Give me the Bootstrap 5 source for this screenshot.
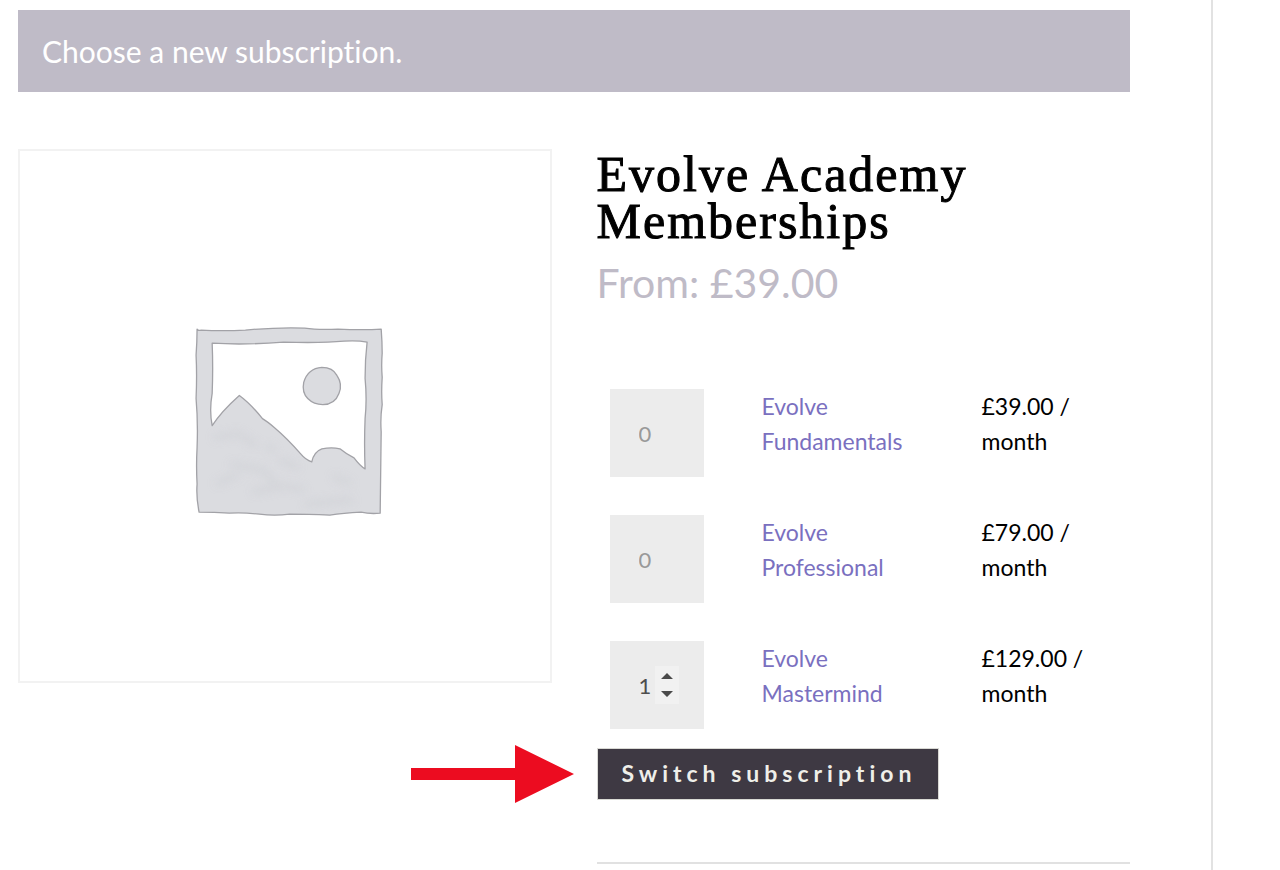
<!DOCTYPE html>
<html lang="en">
<head>
<meta charset="utf-8">
<meta name="viewport" content="width=device-width, initial-scale=1">
<title>Evolve Academy Memberships</title>
<link href="https://cdn.jsdelivr.net/npm/bootstrap@5.3.0/dist/css/bootstrap.min.css" rel="stylesheet">
<style>
  body { font-family: Lato, sans-serif; font-size: 23px; line-height: 35px; font-variant-ligatures: none; color: #000; background: #fff; }
  .page-main { padding: 10px 81px 0 18px; border-right: 2px solid #e2e2e2; }
  .page-side { width: 67px; }
  .notice { background: #bfbbc7; color: #fff; font-size: 30px; line-height: 34px; padding: 24px; margin-bottom: 57px; }
  .product { display: grid; grid-template-columns: minmax(0, 1fr) minmax(0, 1fr); column-gap: 45px; align-items: start; }
  .product-photo { aspect-ratio: 1; border: 2px solid #f2f2f2; }
  .product-photo svg { width: 38%; }
  .product-title { font-family: "Liberation Serif", serif; font-weight: 400; font-size: 50px; line-height: 47px; letter-spacing: 2px; margin: 2px 0 14px; -webkit-text-stroke: 1px #000; }
  .product-price { font-size: 41px; line-height: 48px; color: #bfbbc7; margin: 0 0 70px; }
  .plans { width: 100%; table-layout: fixed; }
  .plans td { padding: 12px 12px 26px 13px; vertical-align: top; }
  .plans tr:last-child td { padding-bottom: 19px; }
  .plans .qty-col { width: 152px; }
  .plans .name-col { width: 220px; }
  .plans a { color: #7a70bf; text-decoration: none; }
  .qty { width: 94px; height: 88px; background: #ececec; border: 0; border-radius: 0; padding: 0 0 0 29px; font-size: 22px; color: #4d4d4d; appearance: textfield; }
  .qty::-webkit-inner-spin-button { appearance: none; }
  .qty.is-empty { color: #999; }
  .stepper { right: 25px; top: 25px; width: 24px; height: 38px; background: #f1f1f1; pointer-events: none; }
  .switch-btn { background: #3e3943; color: #efefe9; border: 1px solid #d9d9d4; border-radius: 0; font-size: 23px; font-weight: 700; line-height: 35px; letter-spacing: 5px; padding: 7px 22px 8px 24px; }
  .pointer-arrow { right: 100%; top: -4px; margin-right: 23px; width: 163px; height: 60px; }
  .meta-rule { border-top: 2px solid #e1e1e1; margin-top: 62px; }
</style>
</head>
<body>
<div class="d-flex min-vh-100">
  <main class="page-main flex-grow-1">
    <div class="notice" role="status">Choose a new subscription.</div>
    <div class="product">
      <div class="product-photo d-flex align-items-center justify-content-center">
        <svg viewBox="-8 -10 200 200" role="img" aria-label="Placeholder image">
          <defs>
            <filter id="wash" x="-20%" y="-20%" width="140%" height="140%"><feGaussianBlur stdDeviation="4"/></filter>
            <clipPath id="paper"><path d="M8 100L30 90 48 70 60 82 110 128 120 135 140 124 175 145 192 192H3V100Z"/></clipPath>
          </defs>
          <g stroke="#a2a2a7" stroke-width="1.3" stroke-linejoin="round" fill="#dbdce0">
            <path fill-rule="evenodd" d="M5 4Q6 6 9 5Q30 6 53 5Q85 2 112 3Q125 5 145 4Q170 5 188 4Q189 17 189 28Q188 40 189 52Q188 67 189 79Q187 92 188 106L187 187Q177 188 168 186Q150 187 137 189Q115 188 97 188Q82 190 67 188Q50 186 37 187Q22 186 7 186Q4 171 5 158Q4 140 5 122Q6 96 4 73Q5 50 4 30Q5 16 5 4Z
            M20 18Q52 20 91 17Q130 18 151 16Q164 15 174 17Q172 34 172 53Q174 74 172 93Q171 118 172 143Q167 140 161 132Q153 128 147 123Q139 121 129 123Q121 126 119 136Q113 134 108 128Q95 113 82 102Q75 96 70 93Q58 78 47 70Q29 86 20 100Q17 85 20 68Q21 43 20 18Z"/>
            <path d="M129 42Q140 42 144 50Q150 59 146 68Q142 79 130 79Q121 79 115 73Q109 67 111 57Q115 43 129 42Z"/>
          </g>
          <g clip-path="url(#paper)" filter="url(#wash)" fill="none" stroke="#cfd0d5" stroke-width="5" opacity=".7">
            <path d="M22 112l24-4 18 12M38 138l32 6 14 14M86 134l20 8M60 166l32-6 20 4M24 158l22-10M112 178l48-4M140 150l18 8M74 120l8 6"/>
          </g>
        </svg>
      </div>
      <div>
        <h1 class="product-title">Evolve Academy Memberships</h1>
        <p class="product-price">From: £39.00</p>
        <form>
          <table class="plans">
            <colgroup><col class="qty-col"><col class="name-col"><col></colgroup>
            <tbody>
              <tr>
                <td><input class="qty is-empty d-block" type="number" min="0" placeholder="0" value="0" aria-labelledby="plan-fundamentals"></td>
                <td><a href="#" id="plan-fundamentals">Evolve<br>Fundamentals</a></td>
                <td>£39.00 /<br>month</td>
              </tr>
              <tr>
                <td><input class="qty is-empty d-block" type="number" min="0" placeholder="0" value="0" aria-labelledby="plan-professional"></td>
                <td><a href="#" id="plan-professional">Evolve<br>Professional</a></td>
                <td>£79.00 /<br>month</td>
              </tr>
              <tr>
                <td>
                  <div class="position-relative d-inline-block align-top">
                    <input class="qty d-block" type="number" min="0" value="1" aria-labelledby="plan-mastermind">
                    <svg class="stepper position-absolute" viewBox="0 0 24 38" aria-hidden="true"><path d="M6 13L12 7 18 13ZM6 25L12 31 18 25Z" fill="#4a4a4a"/></svg>
                  </div>
                </td>
                <td><a href="#" id="plan-mastermind">Evolve<br>Mastermind</a></td>
                <td>£129.00 /<br>month</td>
              </tr>
            </tbody>
          </table>
          <div class="position-relative d-inline-block align-top">
            <button type="submit" class="btn switch-btn d-block">Switch subscription</button>
            <svg class="pointer-arrow position-absolute" viewBox="0 0 163 60" aria-hidden="true"><path d="M0 24H104V1L163 30 104 59V36H0Z" fill="#ec0c20"/></svg>
          </div>
        </form>
        <div class="meta-rule"></div>
      </div>
    </div>
  </main>
  <aside class="page-side flex-shrink-0"></aside>
</div>
<script src="https://cdn.jsdelivr.net/npm/bootstrap@5.3.0/dist/js/bootstrap.bundle.min.js"></script>
</body>
</html>
